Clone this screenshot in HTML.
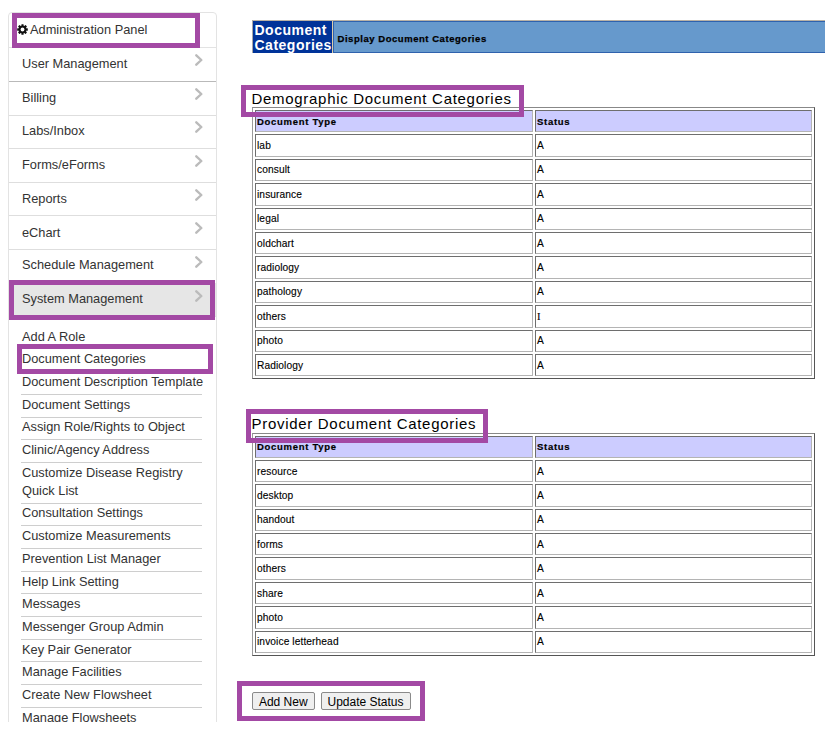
<!DOCTYPE html>
<html><head><meta charset="utf-8">
<style>
html,body{margin:0;padding:0;width:825px;height:730px;overflow:hidden;background:#fff;position:relative;font-family:"Liberation Sans",sans-serif;}
.a{position:absolute;white-space:nowrap;}
/* sidebar */
#side{position:absolute;left:8px;top:12px;width:209px;height:710px;overflow:hidden;}
#sideborder{position:absolute;left:0;top:0;width:207px;height:740px;border:1px solid #e3e3e3;border-radius:4px 4px 0 0;}
.mi{position:absolute;left:14px;font-size:12.8px;color:#333;line-height:15px;}
.dv{position:absolute;left:1px;width:207px;height:1px;background:#dedede;}
.chev{position:absolute;left:186.8px;width:9px;height:12px;}
.si{position:absolute;left:14px;font-size:12.8px;color:#333;line-height:18px;}
.sd{position:absolute;left:13px;width:181px;height:1px;background:#cecece;}
/* main */
.hd{position:absolute;font-size:15px;letter-spacing:0.7px;color:#000;line-height:18px;}
table.dt{position:absolute;left:252px;width:563px;table-layout:fixed;border-collapse:separate;border-spacing:2px;border:1px solid;border-color:#888 #555 #555 #9a9a9a;font-size:10.2px;letter-spacing:0.1px;}
table.dt td{border:1px solid;border-color:#6e6e6e #b4b4b4 #b4b4b4 #6e6e6e;height:20.4px;padding:0 0 0 1px;vertical-align:middle;color:#000;-webkit-text-stroke:0.12px #000;}
table.dt td:first-child{width:275px;}
table.dt tr.h td{background:#ccccff;font-weight:bold;font-size:9.5px;letter-spacing:0.7px;-webkit-text-stroke:0.2px #000;}
.pb{position:absolute;border:5px solid #a349a4;box-sizing:border-box;}
.btn{position:absolute;top:692px;height:18px;box-sizing:border-box;border:1px solid #8a8a8a;border-radius:2px;background:#efefef;font-size:12px;color:#000;text-align:center;line-height:16px;padding-top:0.6px;}
</style></head><body>

<div id="side">
  <div id="sideborder"></div>
  <!-- header -->
  <div class="dv" style="top:35px;background:#e3e3e3"></div>
  <svg class="a" style="left:8.8px;top:11.8px" width="11" height="11" viewBox="0 0 11 11">
    <g transform="translate(5.5 5.5)" fill="#111">
      <circle r="3.7"/>
      <rect x="-1.15" y="-5.3" width="2.3" height="10.6" rx="0.5"/>
      <rect x="-1.15" y="-5.3" width="2.3" height="10.6" rx="0.5" transform="rotate(45)"/>
      <rect x="-1.15" y="-5.3" width="2.3" height="10.6" rx="0.5" transform="rotate(90)"/>
      <rect x="-1.15" y="-5.3" width="2.3" height="10.6" rx="0.5" transform="rotate(135)"/>
      <circle r="1.9" fill="#fff"/>
    </g>
  </svg>
  <div class="mi" style="left:22px;top:9.5px">Administration Panel</div>

  <div class="mi" style="top:44px">User Management</div>
  <div class="dv" style="top:69px;background:#b9b9b9"></div>
  <div class="mi" style="top:78px">Billing</div>
  <div class="dv" style="top:102.6px"></div>
  <div class="mi" style="top:111px">Labs/Inbox</div>
  <div class="dv" style="top:136.2px"></div>
  <div class="mi" style="top:144.5px">Forms/eForms</div>
  <div class="dv" style="top:169.8px"></div>
  <div class="mi" style="top:178.5px">Reports</div>
  <div class="dv" style="top:203.4px"></div>
  <div class="mi" style="top:212.5px">eChart</div>
  <div class="dv" style="top:237px"></div>
  <div class="mi" style="top:245px">Schedule Management</div>
  <div class="dv" style="top:270.6px"></div>
  <div style="position:absolute;left:1px;top:270.6px;width:207px;height:33.6px;background:#e6e6e6"></div>
  <div class="mi" style="top:279px">System Management</div>
  <div class="dv" style="top:304.2px"></div>

  <svg class="chev" style="top:42.00px" viewBox="0 0 9 12"><polyline points="1.3,1.3 6.3,6 1.3,10.7" fill="none" stroke="#bbb" stroke-width="2.4" stroke-linecap="round" stroke-linejoin="round"/></svg>
  <svg class="chev" style="top:75.66px" viewBox="0 0 9 12"><polyline points="1.3,1.3 6.3,6 1.3,10.7" fill="none" stroke="#bbb" stroke-width="2.4" stroke-linecap="round" stroke-linejoin="round"/></svg>
  <svg class="chev" style="top:109.32px" viewBox="0 0 9 12"><polyline points="1.3,1.3 6.3,6 1.3,10.7" fill="none" stroke="#bbb" stroke-width="2.4" stroke-linecap="round" stroke-linejoin="round"/></svg>
  <svg class="chev" style="top:142.98px" viewBox="0 0 9 12"><polyline points="1.3,1.3 6.3,6 1.3,10.7" fill="none" stroke="#bbb" stroke-width="2.4" stroke-linecap="round" stroke-linejoin="round"/></svg>
  <svg class="chev" style="top:176.64px" viewBox="0 0 9 12"><polyline points="1.3,1.3 6.3,6 1.3,10.7" fill="none" stroke="#bbb" stroke-width="2.4" stroke-linecap="round" stroke-linejoin="round"/></svg>
  <svg class="chev" style="top:210.30px" viewBox="0 0 9 12"><polyline points="1.3,1.3 6.3,6 1.3,10.7" fill="none" stroke="#bbb" stroke-width="2.4" stroke-linecap="round" stroke-linejoin="round"/></svg>
  <svg class="chev" style="top:243.96px" viewBox="0 0 9 12"><polyline points="1.3,1.3 6.3,6 1.3,10.7" fill="none" stroke="#bbb" stroke-width="2.4" stroke-linecap="round" stroke-linejoin="round"/></svg>
  <svg class="chev" style="top:277.62px" viewBox="0 0 9 12"><polyline points="1.3,1.3 6.3,6 1.3,10.7" fill="none" stroke="#bbb" stroke-width="2.4" stroke-linecap="round" stroke-linejoin="round"/></svg>

  <div id="sub"><div class="si" style="top:315.70px">Add A Role</div><div class="si" style="top:338.38px">Document Categories</div><div class="sd" style="top:359.18px"></div><div class="si" style="top:361.06px">Document Description Template</div><div class="sd" style="top:381.86px"></div><div class="si" style="top:383.74px">Document Settings</div><div class="sd" style="top:404.54px"></div><div class="si" style="top:406.42px">Assign Role/Rights to Object</div><div class="sd" style="top:427.22px"></div><div class="si" style="top:429.10px">Clinic/Agency Address</div><div class="sd" style="top:449.90px"></div><div class="si" style="top:451.78px">Customize Disease Registry<br>Quick List</div><div class="sd" style="top:490.58px"></div><div class="si" style="top:492.46px">Consultation Settings</div><div class="sd" style="top:513.26px"></div><div class="si" style="top:515.14px">Customize Measurements</div><div class="sd" style="top:535.94px"></div><div class="si" style="top:537.82px">Prevention List Manager</div><div class="sd" style="top:558.62px"></div><div class="si" style="top:560.50px">Help Link Setting</div><div class="sd" style="top:581.30px"></div><div class="si" style="top:583.18px">Messages</div><div class="sd" style="top:603.98px"></div><div class="si" style="top:605.86px">Messenger Group Admin</div><div class="sd" style="top:626.66px"></div><div class="si" style="top:628.54px">Key Pair Generator</div><div class="sd" style="top:649.34px"></div><div class="si" style="top:651.22px">Manage Facilities</div><div class="sd" style="top:672.02px"></div><div class="si" style="top:673.90px">Create New Flowsheet</div><div class="sd" style="top:694.70px"></div><div class="si" style="top:696.58px">Manage Flowsheets</div><div class="sd" style="top:717.38px"></div></div>
</div>

<!-- header bar -->
<div class="a" style="left:252px;top:20px;width:573px;height:1px;background:#b9b2a6"></div>
<div class="a" style="left:252px;top:20px;width:1px;height:33px;background:#a8a8a8"></div>
<div class="a" style="left:253px;top:21px;width:79px;height:32px;background:#003399"></div>
<div class="a" style="left:332px;top:21px;width:1px;height:32px;background:#dccdaa"></div>
<div class="a" style="left:333px;top:21px;width:492px;height:32px;box-sizing:border-box;border:1px solid #2f62ad;border-right:0;background:#6699cc"></div>
<div class="a" style="left:254.5px;top:22.7px;font-size:14px;font-weight:bold;color:#fff;line-height:15.6px;letter-spacing:0.5px">Document<br>Categories</div>
<div class="a" style="left:337.5px;top:32.5px;font-size:9.5px;letter-spacing:0.54px;-webkit-text-stroke:0.25px #000;font-weight:bold;color:#000;line-height:12px">Display Document Categories</div>

<div class="hd" style="left:251.5px;top:89.5px">Demographic Document Categories</div>
<div class="hd" style="left:251.5px;top:415px">Provider Document Categories</div>

<table class="dt" id="t1" style="top:107px"><tr class="h"><td>Document Type</td><td>Status</td></tr><tr><td>lab</td><td>A</td></tr><tr><td>consult</td><td>A</td></tr><tr><td>insurance</td><td>A</td></tr><tr><td>legal</td><td>A</td></tr><tr><td>oldchart</td><td>A</td></tr><tr><td>radiology</td><td>A</td></tr><tr><td>pathology</td><td>A</td></tr><tr><td>others</td><td><span style="font-family:'Liberation Serif';font-size:10.5px">I</span></td></tr><tr><td>photo</td><td>A</td></tr><tr><td>Radiology</td><td>A</td></tr></table>
<table class="dt" id="t2" style="top:432.5px"><tr class="h"><td>Document Type</td><td>Status</td></tr><tr><td>resource</td><td>A</td></tr><tr><td>desktop</td><td>A</td></tr><tr><td>handout</td><td>A</td></tr><tr><td>forms</td><td>A</td></tr><tr><td>others</td><td>A</td></tr><tr><td>share</td><td>A</td></tr><tr><td>photo</td><td>A</td></tr><tr><td>invoice letterhead</td><td>A</td></tr></table>

<div class="btn" style="left:252px;width:62.5px">Add New</div>
<div class="btn" style="left:320.5px;width:90px">Update Status</div>

<!-- annotation boxes -->
<div class="pb" style="left:12px;top:13px;width:188px;height:34.5px"></div>
<div class="pb" style="left:9px;top:280px;width:206px;height:39.7px"></div>
<div class="pb" style="left:17px;top:344.2px;width:196px;height:29.6px"></div>
<div class="pb" style="left:241px;top:85px;width:282.6px;height:31.6px"></div>
<div class="pb" style="left:246px;top:409.2px;width:242px;height:33.5px"></div>
<div class="pb" style="left:237px;top:681px;width:188px;height:39.8px"></div>

</body></html>
